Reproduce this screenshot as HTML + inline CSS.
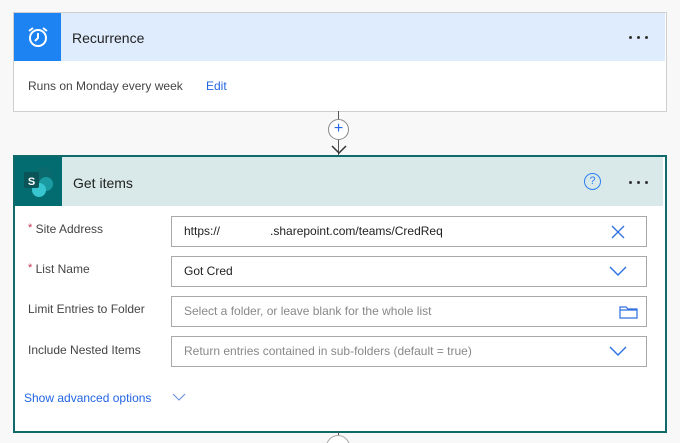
<!DOCTYPE html><html><head><style>
html,body{margin:0;width:680px;height:443px;overflow:hidden}
body{background:#f8f8f8;font-family:"Liberation Sans",sans-serif;position:relative}
.a{position:absolute}
.lbl{position:absolute;left:28px;font-size:12px;color:#444}
.lbl b{color:#c4314b;font-weight:normal;font-size:11px;vertical-align:top}
.in{position:absolute;left:171px;height:29px;border:1px solid #a8a8a8;background:#fff;font-size:12px;line-height:29px;padding-left:12px;box-sizing:content-box;color:#222}
.ph{color:#888}
.dots{position:absolute;width:22px;height:4px}
.dots i{position:absolute;top:0;width:3px;height:3px;border-radius:50%;background:#333}
</style></head><body>
<div class="a" style="left:13px;top:12px;width:652px;height:98px;border:1px solid #cfcfcf;background:#fff"></div>
<div class="a" style="left:14px;top:13px;width:651px;height:48px;background:#dfecfd"></div>
<div class="a" style="left:14px;top:13px;width:47px;height:48px;background:#1d82f2"></div>
<svg class="a" style="left:25px;top:24px" width="26" height="26" viewBox="0 0 26 26" fill="none" stroke="#fff" stroke-width="2"><circle cx="13" cy="14" r="8"/><path d="M13 9v5l-3 3M4 7l4-3M22 7l-4-3"/></svg>
<div class="a" style="left:72px;top:30px;font-size:14px;color:#222">Recurrence</div>
<div class="dots" style="left:629px;top:36px"><i style="left:0"></i><i style="left:8px"></i><i style="left:16px"></i></div>
<div class="a" style="left:28px;top:79px;font-size:12px;color:#444">Runs on Monday every week</div>
<div class="a" style="left:206px;top:79px;font-size:12px;color:#2266e3">Edit</div>
<div class="a" style="left:338px;top:111px;width:1px;height:44px;background:#555"></div>
<div class="a" style="left:328px;top:119px;width:19px;height:19px;border:1px solid #888;border-radius:50%;background:#fff;color:#2266e3;text-align:center;line-height:18px;font-size:16px">+</div>
<svg class="a" style="left:331px;top:143px" width="16" height="12"><path d="M1 3l7 7 7-7" stroke="#333" stroke-width="1.5" fill="none"/></svg>
<div class="a" style="left:13px;top:155px;width:650px;height:274px;border:2px solid #0f6b6b;background:#fff"></div>
<div class="a" style="left:15px;top:157px;width:648px;height:49px;background:#d9e9e9"></div>
<div class="a" style="left:15px;top:157px;width:47px;height:49px;background:#036c70"></div>
<svg class="a" style="left:21px;top:165px" width="36" height="34"><circle cx="22" cy="11" r="9" fill="#0b6a6d"/><circle cx="25" cy="19" r="7" fill="#1a9ba1"/><circle cx="18" cy="25" r="7" fill="#37c6d0"/><rect x="3" y="7" width="15" height="16" rx="2" fill="#0a5356"/><text x="10.5" y="20" fill="#fff" font-size="11" font-weight="bold" text-anchor="middle" font-family="Liberation Sans">S</text></svg>
<div class="a" style="left:73px;top:175px;font-size:14px;color:#222">Get items</div>
<div class="a" style="left:584px;top:173px;width:15px;height:15px;border:1.5px solid #2d7ff0;border-radius:50%;color:#2d7ff0;font-size:11px;text-align:center;line-height:15px">?</div>
<div class="dots" style="left:629px;top:181px"><i style="left:0"></i><i style="left:8px"></i><i style="left:16px"></i></div>
<div class="lbl" style="top:222px"><b>*</b> Site Address</div>
<div class="lbl" style="top:262px"><b>*</b> List Name</div>
<div class="lbl" style="top:302px">Limit Entries to Folder</div>
<div class="lbl" style="top:343px">Include Nested Items</div>
<div class="in" style="top:216px;width:462px">https://<span style="display:inline-block;width:50px"></span>.sharepoint.com/teams/CredReq</div>
<div class="in" style="top:256px;width:462px">Got Cred</div>
<div class="in ph" style="top:296px;width:462px">Select a folder, or leave blank for the whole list</div>
<div class="in ph" style="top:336px;width:462px">Return entries contained in sub-folders (default = true)</div>
<svg class="a" style="left:610px;top:224px" width="16" height="16"><path d="M2 2l12 12M14 2L2 14" stroke="#2d6fe0" stroke-width="1.3"/></svg>
<svg class="a" style="left:608px;top:265px" width="20" height="12"><path d="M2 2l8 8 8-8" stroke="#2d6fe0" stroke-width="1.4" fill="none"/></svg>
<svg class="a" style="left:619px;top:304px" width="20" height="15"><path d="M1 3h6l2 2h9v9H1zM1 6h17" stroke="#2d6fe0" stroke-width="1.2" fill="none"/></svg>
<svg class="a" style="left:608px;top:345px" width="20" height="12"><path d="M2 2l8 8 8-8" stroke="#2d6fe0" stroke-width="1.4" fill="none"/></svg>
<div class="a" style="left:24px;top:391px;font-size:12px;color:#2266e3">Show advanced options</div>
<svg class="a" style="left:172px;top:393px" width="14" height="9"><path d="M1 1l6 6 6-6" stroke="#6a8fd8" stroke-width="1.1" fill="none"/></svg>
<div class="a" style="left:338px;top:431px;width:1px;height:6px;background:#555"></div>
<div class="a" style="left:326px;top:435px;width:22px;height:22px;border:1px solid #aaa;border-radius:50%;background:#fff"></div>
</body></html>
